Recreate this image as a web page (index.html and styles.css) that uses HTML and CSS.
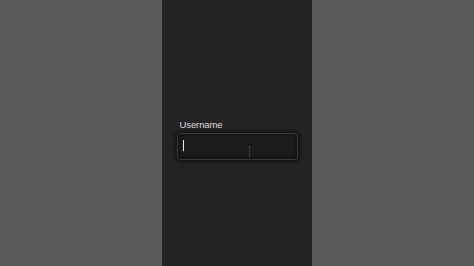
FILE: index.html
```html
<!DOCTYPE html>
<html>
<head>
<meta charset="utf-8">
<link rel="stylesheet" href="styles.css">
</head>
<body>
<div class="page">
  <div class="column">
    <div class="field">
      <label class="label">Username</label>
      <div class="input"><span class="caret"></span>
        <svg class="ibeam" width="5" height="15" viewBox="0 0 5 15"><path d="M0.5 0.5h4M2.5 0.5v14M0.5 14.5h4" stroke="#0a0a0a" stroke-width="1" fill="none"/><path d="M2.5 1v13" stroke="#777" stroke-width="0.4"/></svg>
      </div>
    </div>
  </div>
</div>
</body>
</html>
```
FILE: styles.css
```css
html, body { margin: 0; padding: 0; height: 100%; }
body { background: #5a5a5a; font-family: "Liberation Sans", Arial, sans-serif; }
.page { display: flex; justify-content: center; height: 100%; }
.column { width: 150px; background: #242424; display: flex; flex-direction: column; align-items: center; padding-top: 119px; box-sizing: border-box; }
.field { width: 121px; display: flex; flex-direction: column; gap: 3px; }
.label { color: #dcdcdc; font-size: 9.5px; line-height: 11px; padding-left: 3px; letter-spacing: -0.1px; }
.input { position: relative; height: 27px; border-radius: 4px; background: #1c1c1c; border: 1px solid #3c3c3c; box-shadow: 0 0 4px 2px rgba(0,0,0,0.55), inset 0 0 4px rgba(0,0,0,0.8); box-sizing: border-box; display: flex; align-items: center; padding-left: 5px; padding-bottom: 2px; }
.caret { width: 1px; height: 11px; background: #e8e8e8; }
.ibeam { position: absolute; left: 69px; top: 10px; }
```
